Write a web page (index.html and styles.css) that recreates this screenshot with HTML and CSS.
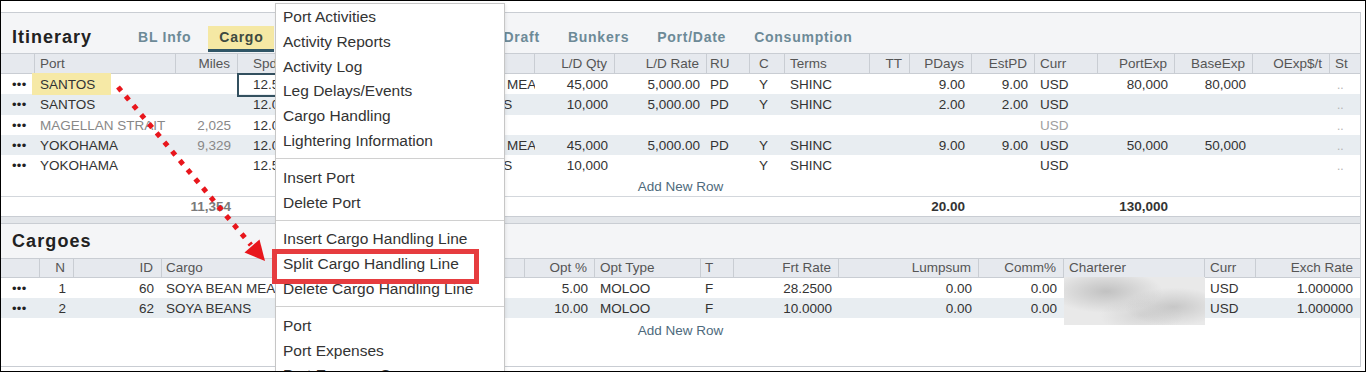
FILE: index.html
```html
<!DOCTYPE html>
<html lang="en">
<head>
<meta charset="utf-8">
<title>Itinerary</title>
<link rel="stylesheet" href="styles.css">
</head>
<body>
<div class="frame">
  <div class="topgap"></div>
  <section class="panel itin">
    <div class="titlebar">
      <h2 class="title">Itinerary</h2>
      <nav class="tabs">
        <span class="tab">BL Info</span>
        <span class="tab active">Cargo</span>
        <span class="tab far">Draft</span>
        <span class="tab">Bunkers</span>
        <span class="tab">Port/Date</span>
        <span class="tab">Consumption</span>
      </nav>
    </div>
    <div class="row ig head">
      <span></span><span>Port</span><span class="r">Miles</span><span class="spd">Spd</span><span></span><span></span><span class="r">L/D Qty</span><span class="r">L/D Rate</span><span class="s3">RU</span><span class="s8">C</span><span>Terms</span><span class="r">TT</span><span class="r">PDays</span><span class="r">EstPD</span><span>Curr</span><span class="r">PortExp</span><span class="r">BaseExp</span><span class="r">OExp$/t</span><span>St</span>
    </div>
    <div class="row ig body">
      <span class="dots">•••</span><span><b class="hl">SANTOS</b></span><span class="r"></span><span class="spd sel">12.50</span><span></span><span class="clip">SOYA BEAN MEAL</span><span class="r">45,000</span><span class="r">5,000.00</span><span class="s3">PD</span><span class="s8">Y</span><span>SHINC</span><span class="r"></span><span class="r">9.00</span><span class="r">9.00</span><span>USD</span><span class="r">80,000</span><span class="r">80,000</span><span class="r"></span><span class="st">..</span>
    </div>
    <div class="row ig body alt">
      <span class="dots">•••</span><span>SANTOS</span><span class="r"></span><span class="spd">12.00</span><span></span><span class="clip">SOYA BEANS</span><span class="r">10,000</span><span class="r">5,000.00</span><span class="s3">PD</span><span class="s8">Y</span><span>SHINC</span><span class="r"></span><span class="r">2.00</span><span class="r">2.00</span><span>USD</span><span class="r"></span><span class="r"></span><span class="r"></span><span class="st">..</span>
    </div>
    <div class="row ig body">
      <span class="dots">•••</span><span class="muted">MAGELLAN STRAIT</span><span class="r muted">2,025</span><span class="spd">12.00</span><span></span><span class="clip"></span><span class="r"></span><span class="r"></span><span class="s3"></span><span class="s8"></span><span></span><span class="r"></span><span class="r"></span><span class="r"></span><span class="muted2">USD</span><span class="r"></span><span class="r"></span><span class="r"></span><span class="st">..</span>
    </div>
    <div class="row ig body alt">
      <span class="dots">•••</span><span>YOKOHAMA</span><span class="r muted">9,329</span><span class="spd">12.00</span><span></span><span class="clip">SOYA BEAN MEAL</span><span class="r">45,000</span><span class="r">5,000.00</span><span class="s3">PD</span><span class="s8">Y</span><span>SHINC</span><span class="r"></span><span class="r">9.00</span><span class="r">9.00</span><span>USD</span><span class="r">50,000</span><span class="r">50,000</span><span class="r"></span><span class="st">..</span>
    </div>
    <div class="row ig body">
      <span class="dots">•••</span><span>YOKOHAMA</span><span class="r"></span><span class="spd">12.50</span><span></span><span class="clip">SOYA BEANS</span><span class="r">10,000</span><span class="r"></span><span class="s3"></span><span class="s8">Y</span><span>SHINC</span><span class="r"></span><span class="r"></span><span class="r"></span><span>USD</span><span class="r"></span><span class="r"></span><span class="r"></span><span class="st">..</span>
    </div>
    <div class="add add-itin">Add New Row</div>
    <div class="row ig tot">
      <span></span><span></span><span class="r muted">11,354</span><span></span><span></span><span></span><span></span><span></span><span></span><span></span><span></span><span></span><span class="r">20.00</span><span></span><span></span><span class="r">130,000</span><span></span><span></span><span></span>
    </div>
  </section>
  <div class="band"></div>
  <section class="panel cargo">
    <div class="titlebar">
      <h2 class="title">Cargoes</h2>
    </div>
    <div class="row cg head">
      <span></span><span class="r8">N</span><span class="r8">ID</span><span class="s4">Cargo</span><span></span><span class="r">Opt %</span><span>Opt Type</span><span class="s4">T</span><span class="r">Frt Rate</span><span class="r">Lumpsum</span><span class="r">Comm%</span><span>Charterer</span><span>Curr</span><span class="r">Exch Rate</span>
    </div>
    <div class="row cg body">
      <span class="dots">•••</span><span class="r8">1</span><span class="r8">60</span><span class="s4 clip">SOYA BEAN MEAL</span><span></span><span class="r">5.00</span><span>MOLOO</span><span class="s4">F</span><span class="r">28.2500</span><span class="r">0.00</span><span class="r">0.00</span><span></span><span>USD</span><span class="r">1.000000</span>
    </div>
    <div class="row cg body alt">
      <span class="dots">•••</span><span class="r8">2</span><span class="r8">62</span><span class="s4 clip">SOYA BEANS</span><span></span><span class="r">10.00</span><span>MOLOO</span><span class="s4">F</span><span class="r">10.0000</span><span class="r">0.00</span><span class="r">0.00</span><span></span><span>USD</span><span class="r">1.000000</span>
    </div>
    <div class="add add-cargo">Add New Row</div>
  </section>

  <div class="redact"></div>

  <ul class="menu">
    <li>Port Activities</li>
    <li>Activity Reports</li>
    <li>Activity Log</li>
    <li>Leg Delays/Events</li>
    <li>Cargo Handling</li>
    <li>Lightering Information</li>
    <li class="sep"></li>
    <li>Insert Port</li>
    <li>Delete Port</li>
    <li class="sep"></li>
    <li>Insert Cargo Handling Line</li>
    <li>Split Cargo Handling Line</li>
    <li>Delete Cargo Handling Line</li>
    <li class="sep"></li>
    <li>Port</li>
    <li>Port Expenses</li>
    <li>Port Expense Summary</li>
  </ul>

  <div class="redbox"></div>

  <svg class="arrow" width="1366" height="372" viewBox="0 0 1366 372" aria-hidden="true">
    <line x1="118" y1="87" x2="251" y2="245" stroke="#e8161c" stroke-width="5" stroke-dasharray="5 7"/>
    <polygon points="265,261 244.5,252.5 259.5,239.5" fill="#e8161c"/>
  </svg>
</div>
</body>
</html>
```
FILE: styles.css
```css
* {
  box-sizing: border-box;
  margin: 0;
  padding: 0;
}

body {
  margin: 0;
  background: #fff;
  color: #333;
  font-family: "Liberation Sans", Arial, sans-serif;
}

.frame {
  position: relative;
  width: 1366px;
  height: 372px;
  border: 1px solid #000;
  background: #fff;
  overflow: hidden;
}

.topgap {
  height: 11px;
}

.panel {
  width: 1360px;
  border-right: 1px solid #c9cdd3;
  background: #fff;
}

.itin {
  border-top: 1px solid #c9cdd3;
}

.titlebar {
  display: flex;
  align-items: flex-end;
  height: 40px;
  padding: 0 0 1px 11px;
  background: #f4f5f7;
}

.title {
  font-size: 18px;
  font-weight: bold;
  letter-spacing: 1px;
  color: #222;
  line-height: 23px;
  margin-bottom: 3px;
}

.tabs {
  display: flex;
  gap: 6px;
  margin-left: 35px;
}

.tab {
  font-size: 14px;
  font-weight: bold;
  letter-spacing: 0.75px;
  color: #6d8a97;
  line-height: 23px;
  padding: 0 11px;
  border-bottom: 3px solid transparent;
}

.tab.active {
  background: #f5e8a4;
  color: #3d4a40;
  border-bottom-color: #2f5566;
}

.tab.far {
  margin-left: 212px;
}

.row {
  display: grid;
  height: 20px;
  line-height: 20px;
  font-size: 13.5px;
  white-space: nowrap;
  color: #333;
}

.row.body {
  line-height: 22px;
}

.ig.body {
  height: 20.25px;
}

.ig {
  grid-template-columns: 34px 141px 62px 62px 110px 125px 80px 92px 43px 35px 85px 40px 62px 63px 63px 77px 78px 77px 30px;
}

.cg {
  grid-template-columns: 39px 34px 88px 138px 225px 70px 106px 33px 105px 140px 85px 141px 51px 104px;
}

.row > span {
  padding-left: 5px;
}

.row > .r {
  text-align: right;
  padding-left: 0;
  padding-right: 7px;
}

.row > .r8 {
  text-align: right;
  padding-left: 0;
  padding-right: 8px;
}

.row > .s3 {
  padding-left: 3px;
}

.row > .s4 {
  padding-left: 4px;
}

.row > .s8 {
  padding-left: 9px;
}

.row > .spd {
  padding-left: 15px;
}

.row > .clip {
  overflow: hidden;
  padding-left: 17px;
}

.cg > .clip {
  padding-left: 4px;
}

.row > .dots {
  padding-left: 11px;
  font-size: 13px;
  letter-spacing: 0.3px;
  color: #222;
}

.row > .st {
  padding-left: 7px;
  color: #b3b3b3;
  font-size: 12px;
}

.muted {
  color: #888;
}

.muted2 {
  color: #a0a0a0;
}

.alt {
  background: #e8edf1;
}

.head {
  height: 21px;
  line-height: 19px;
  background: #e6e9ee;
  border-top: 1px solid #c9cdd3;
  border-bottom: 1px solid #c9cdd3;
  color: #555;
}

.head > span {
  border-right: 1px solid #c9cdd3;
}

.head > span:last-child {
  border-right: 0;
}

.cg.head {
  height: 20px;
  line-height: 18px;
}

.hl {
  display: inline-block;
  font-weight: normal;
  background: #f6e9a6;
  margin-left: -8px;
  padding: 0 16px 0 8px;
  height: 22px;
  line-height: 23px;
  position: relative;
  top: -1px;
  vertical-align: top;
}

.sel {
  outline: 2px solid #33505f;
  outline-offset: -1px;
}

.add {
  text-align: center;
  color: #4e6a7c;
  font-size: 13.5px;
}

.add-itin {
  height: 21px;
  line-height: 23px;
}

.add-cargo {
  height: 24px;
  line-height: 26px;
}

.tot {
  height: 20px;
  line-height: 19px;
  border-top: 1px solid #d3d7dc;
  font-weight: bold;
}

.tot > .muted {
  color: #7a7a7a;
}

.band {
  width: 1360px;
  height: 8px;
  background: #e3e6ea;
  border-top: 1px solid #c9cdd3;
  border-bottom: 1px solid #c9cdd3;
  border-right: 1px solid #c9cdd3;
}

.cargo {
  height: 143px;
  border-bottom: 1px solid #c9cdd3;
}

.cargo .titlebar {
  height: 34px;
  align-items: center;
  padding: 0 0 0 11px;
}

.cargo .title {
  margin-bottom: 0;
  letter-spacing: 1.1px;
}

.redact {
  position: absolute;
  left: 1063px;
  top: 276px;
  width: 141px;
  height: 48px;
  background:
    radial-gradient(ellipse 40% 45% at 30% 30%, rgba(180, 180, 180, 0.75), rgba(180, 180, 180, 0) 100%),
    radial-gradient(ellipse 35% 40% at 78% 62%, rgba(185, 185, 185, 0.7), rgba(185, 185, 185, 0) 100%),
    radial-gradient(ellipse 30% 35% at 55% 80%, rgba(200, 200, 200, 0.6), rgba(200, 200, 200, 0) 100%),
    #e9e9e9;
}

.menu {
  position: absolute;
  left: 274px;
  top: 2px;
  width: 230px;
  height: 390px;
  background: #fff;
  border: 1px solid #c6c6c6;
  box-shadow: 1px 1px 3px rgba(0, 0, 0, 0.08);
  font-size: 15.5px;
  color: #333;
  list-style: none;
}

.menu li {
  height: 24.8px;
  line-height: 25.8px;
  padding-left: 7px;
  white-space: nowrap;
}

.menu li.sep {
  height: 1px;
  margin: 5.5px 0;
  background: #d0d0d0;
}

.redbox {
  position: absolute;
  left: 271px;
  top: 248px;
  width: 207px;
  height: 35px;
  border: 5px solid #e63c3f;
}

.arrow {
  position: absolute;
  left: -1px;
  top: -1px;
  pointer-events: none;
}
```
